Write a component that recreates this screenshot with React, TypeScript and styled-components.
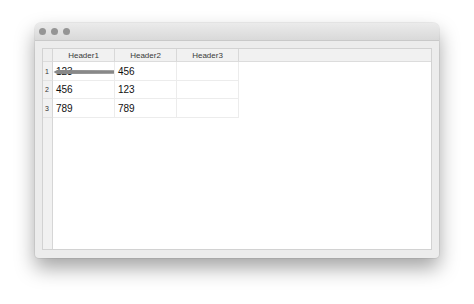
import React from 'react';
import styled, { createGlobalStyle } from 'styled-components';

const GlobalStyle = createGlobalStyle`
    html, body {
        margin: 0;
        padding: 0;
        background: #ffffff;
        font-family: "Liberation Sans", Arial, sans-serif;
    }
`;

const Page = styled.div`
    width: 474px;
    height: 304px;
    padding: 23px 0 0 35px;
    box-sizing: border-box;
`;

const Window = styled.div`
    width: 404px;
    height: 235px;
    display: flex;
    flex-direction: column;
    border-radius: 6px 6px 4px 4px;
    background: #ececec;
    box-shadow: 0 10px 20px rgba(0, 0, 0, 0.36), 0 0 0 1px rgba(0, 0, 0, 0.06);
    overflow: hidden;
`;

const TitleBar = styled.div`
    height: 17px;
    flex: none;
    display: flex;
    align-items: center;
    gap: 5px;
    padding-left: 4px;
    background: linear-gradient(#ebebeb, #d9d9d9);
    border-bottom: 1px solid #c9c9c9;
`;

const Light = styled.span`
    width: 7px;
    height: 7px;
    border-radius: 50%;
    background: #959595;
`;

const Body = styled.div`
    flex: 1;
    display: flex;
    padding: 7px 7px 8px 7px;
`;

const Table = styled.div`
    flex: 1;
    display: grid;
    grid-template-columns: 10px 62px 62px 62px 1fr;
    grid-template-rows: 13px 19px 18px 19px 1fr;
    background: #ffffff;
    border: 1px solid #d2d2d2;
`;

const Corner = styled.div`
    background: #eeeeee;
    border-right: 1px solid #d6d6d6;
    border-bottom: 1px solid #dcdcdc;
`;

const HeaderCell = styled.div<{ $filler?: boolean }>`
    background: #f1f1f1;
    border-right: ${p => (p.$filler ? 'none' : '1px solid #d8d8d8')};
    border-bottom: 1px solid #dcdcdc;
    font-size: 8px;
    color: #3a3a3a;
    display: flex;
    align-items: center;
    justify-content: center;
`;

const RowNum = styled.div<{ $empty?: boolean }>`
    background: #f1f1f1;
    border-right: 1px solid #d6d6d6;
    border-bottom: ${p => (p.$empty ? 'none' : '1px solid #e2e2e2')};
    font-size: 7px;
    color: #333;
    display: flex;
    align-items: center;
    padding-left: 2px;
`;

const Cell = styled.div`
    position: relative;
    border-right: 1px solid #ececec;
    border-bottom: 1px solid #ececec;
    font-size: 10px;
    color: #111;
    display: flex;
    align-items: center;
    padding-left: 3px;
`;

const Blank = styled.div``;

const DragLine = styled.svg`
    position: absolute;
    left: 0;
    top: 7px;
`;

const rows = [
    ['123', '456', ''],
    ['456', '123', ''],
    ['789', '789', ''],
];

const App: React.FC = () => {
    return (
        <Page>
            <GlobalStyle />
            <Window>
                <TitleBar>
                    <Light />
                    <Light />
                    <Light />
                </TitleBar>
                <Body>
                    <Table>
                        <Corner />
                        <HeaderCell>Header1</HeaderCell>
                        <HeaderCell>Header2</HeaderCell>
                        <HeaderCell>Header3</HeaderCell>
                        <HeaderCell $filler />
                        {rows.map((r, i) => (
                            <React.Fragment key={i}>
                                <RowNum>{i + 1}</RowNum>
                                {r.map((v, j) => (
                                    <Cell key={j}>
                                        {v}
                                        {i === 0 && j === 0 && (
                                            <DragLine width="62" height="6" viewBox="0 0 62 6">
                                                <path d="M0.5 3 L4 1 L61 1.2 L61 4.8 L4 5 Z" fill="#888888" />
                                            </DragLine>
                                        )}
                                    </Cell>
                                ))}
                                <Blank />
                            </React.Fragment>
                        ))}
                        <RowNum $empty />
                    </Table>
                </Body>
            </Window>
        </Page>
    );
};

export default App;
